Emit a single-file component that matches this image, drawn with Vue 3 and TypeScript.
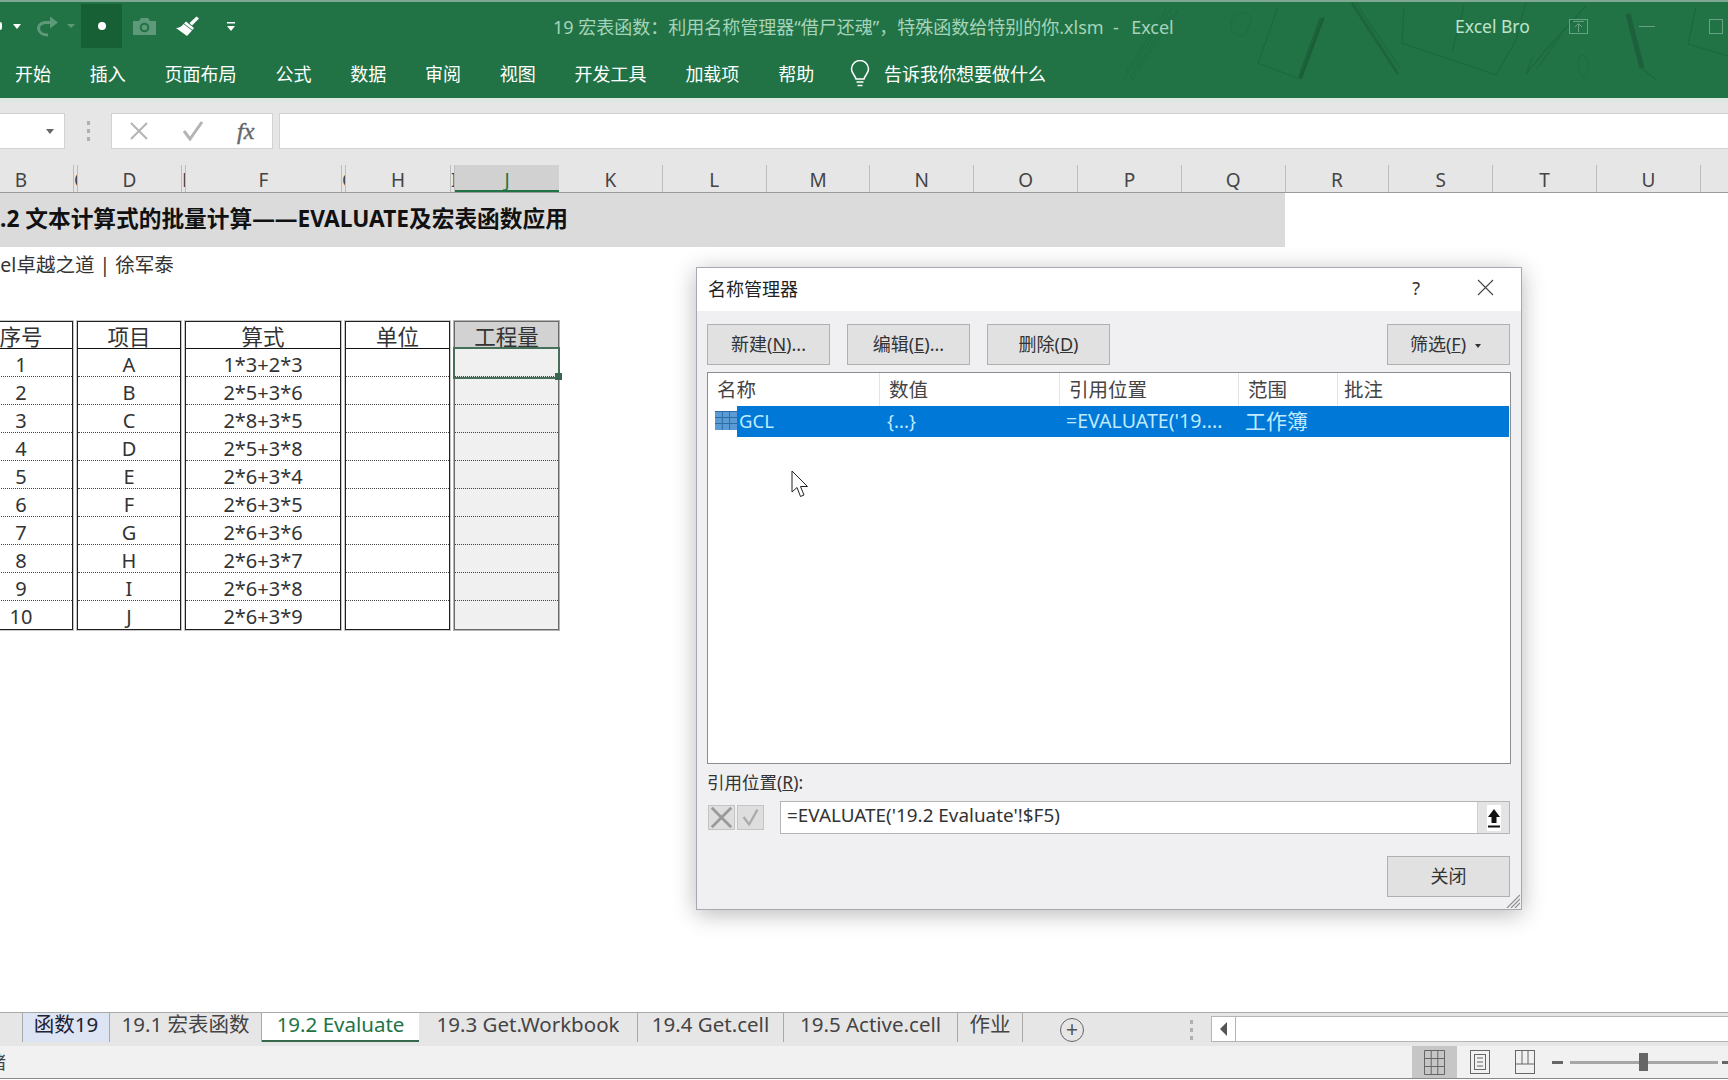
<script setup lang="ts">
interface Row { no: string; item: string; formula: string }
const rows: Row[] = [
  { no: '1', item: 'A', formula: '1*3+2*3' },
  { no: '2', item: 'B', formula: '2*5+3*6' },
  { no: '3', item: 'C', formula: '2*8+3*5' },
  { no: '4', item: 'D', formula: '2*5+3*8' },
  { no: '5', item: 'E', formula: '2*6+3*4' },
  { no: '6', item: 'F', formula: '2*6+3*5' },
  { no: '7', item: 'G', formula: '2*6+3*6' },
  { no: '8', item: 'H', formula: '2*6+3*7' },
  { no: '9', item: 'I', formula: '2*6+3*8' },
  { no: '10', item: 'J', formula: '2*6+3*9' },
]
const menu = ['开始', '插入', '页面布局', '公式', '数据', '审阅', '视图', '开发工具', '加载项', '帮助']
const cols = ['B', 'C', 'D', 'E', 'F', 'G', 'H', 'I', 'J', 'K', 'L', 'M', 'N', 'O', 'P', 'Q', 'R', 'S', 'T', 'U', 'V']
const sheets = ['函数19', '19.1 宏表函数', '19.2 Evaluate', '19.3 Get.Workbook', '19.4 Get.cell', '19.5 Active.cell', '作业']
const listHead = ['名称', '数值', '引用位置', '范围', '批注']
</script>

<template>
  <div class="app">
    <header class="ribbon">
      <svg class="sketch" width="728" height="96" viewBox="0 0 728 96" fill="none">
        <g stroke="#000" stroke-opacity=".1" stroke-width="1.2">
          <path d="M172 5 L124 78 M178 8 L132 78 M166 8 L126 70 M172 12 L130 76" stroke-opacity=".06" />
          <path d="M232 18 C228 30 238 38 246 32 L252 16 C246 8 236 10 232 18 Z" stroke-opacity=".05" />
          <path d="M278 5 L258 61 L300 77 L324 15" />
          <path d="M322 16 L300 76" stroke-width="5" stroke-opacity=".13" />
          <path d="M352 1 L398 72" stroke-width="3" stroke-opacity=".12" />
          <path d="M356 1 L400 66" />
          <path d="M404 5 L402 41 L496 73 L516 38 L526 0" />
          <path d="M452 50 L464 4" />
          <path d="M526 72 L544 50 L586 4 M536 68 L562 32 M526 72 L532 56" />
          <path d="M578 58 C580 50 590 52 588 66 C586 78 578 78 578 58 Z" stroke-opacity=".06" />
          <path d="M628 12 L642 66" stroke-width="5" stroke-opacity=".15" />
          <path d="M642 66 L656 78" />
          <path d="M696 5 L688 42 L728 54" />
        </g>
      </svg>
      <div class="qat">
        <span class="undo-edge"></span>
        <span class="caret qat-caret-a"></span>
        <svg class="i-redo" width="22" height="21" viewBox="0 0 22 21" fill="none">
          <path d="M12 19 C1 19 -1 8 9 6.500 H15" stroke="#5e9a79" stroke-width="3" />
          <path d="M14 0.500 L22 6.500 L14 12.500 Z" fill="#5e9a79" />
        </svg>
        <span class="caret qat-caret-b"></span>
        <div class="rec"><span class="rec-dot"></span></div>
        <svg class="i-cam" width="23" height="17" viewBox="0 0 23 17">
          <path d="M0 3 H6 L8 0 H15 L17 3 H23 V17 H0 Z" fill="#5e9a79" />
          <circle cx="11.500" cy="9.500" r="4.800" fill="#217346" />
          <circle cx="11.500" cy="9.500" r="2.800" fill="#5e9a79" />
        </svg>
        <svg class="i-brush" width="23" height="20" viewBox="0 0 23 20">
          <path d="M23 2.500 L20.500 0.500 L13.500 7 L16 9.500 Z" fill="#fff" />
          <path d="M10 5.500 L18 12 L16.500 14 L8 7.500 Z" fill="#fff" />
          <path d="M7.500 8 L16 14.500 L11 20 L0 12 Q4.500 12 7.500 8 Z" fill="#fff" />
        </svg>
        <svg class="i-custom" width="8" height="9" viewBox="0 0 8 9">
          <path d="M0 0 H8 V1.500 H0 Z M0 4 H8 L4 9 Z" fill="#fff" />
        </svg>
        <div class="doc-title">19 宏表函数：利用名称管理器“借尸还魂”，特殊函数给特别的你.xlsm&nbsp; - &nbsp;&thinsp;Excel</div>
        <div class="user">Excel Bro</div>
        <svg class="i-win i-ribbon" width="19" height="15" viewBox="0 0 19 15" fill="none" stroke="#68a183">
          <rect x=".5" y=".5" width="18" height="14" />
          <path d="M9.500 13 V5 M6 8 L9.500 4.500 L13 8 M4 2.500 H15" />
        </svg>
        <span class="i-min"></span>
        <span class="i-max"></span>
      </div>
      <nav class="menu">
        <span v-for="m in menu" :key="m">{{ m }}</span>
        <div class="tell">
          <svg width="20" height="27" viewBox="0 0 20 27" fill="none" stroke="#fff" stroke-width="1.5">
            <path d="M6 19 C5 15 1.500 13.500 1.500 9 A8.500 8.500 0 0 1 18.500 9 C18.500 13.500 15 15 14 19 Z" />
            <path d="M6.500 22 H13.500 M7.500 25.500 H12.500" />
          </svg>
          <span>告诉我你想要做什么</span>
        </div>
      </nav>
    </header>
    <div class="ribbon-edge"></div>

    <section class="formula">
      <div class="namebox"><span class="caret-dark"></span></div>
      <div class="grip"><i></i><i></i><i></i></div>
      <div class="fx-btns">
        <svg width="20" height="20" viewBox="0 0 20 20" fill="none" stroke="#b4b4b4" stroke-width="2"><path d="M2 2 L18 18 M18 2 L2 18" /></svg>
        <svg width="22" height="20" viewBox="0 0 22 20" fill="none" stroke="#b4b4b4" stroke-width="3"><path d="M2 10 L8 18 L20 1" /></svg>
        <span class="fx">fx</span>
      </div>
      <div class="fx-input"></div>
    </section>

    <div class="col-heads">
      <div v-for="c in cols" :key="c" class="col-head" :class="{ on: c === 'J' }">{{ c }}</div>
    </div>

    <main class="sheet">
      <h1 class="band">.2 文本计算式的批量计算——EVALUATE及宏表函数应用</h1>
      <p class="author">cel卓越之道 | 徐军泰</p>
      <div class="table">
        <div class="col">
          <div class="th">序号</div>
          <div v-for="r in rows" :key="r.no" class="td">{{ r.no }}</div>
        </div>
        <div class="col">
          <div class="th">项目</div>
          <div v-for="r in rows" :key="r.no" class="td">{{ r.item }}</div>
        </div>
        <div class="col">
          <div class="th">算式</div>
          <div v-for="r in rows" :key="r.no" class="td">{{ r.formula }}</div>
        </div>
        <div class="col">
          <div class="th">单位</div>
          <div v-for="r in rows" :key="r.no" class="td"></div>
        </div>
        <div class="col qty">
          <div class="th">工程量</div>
          <div v-for="(r, i) in rows" :key="r.no" class="td" :class="{ sel: i === 0 }"></div>
        </div>
      </div>
    </main>

    <div class="tabbar">
      <div class="tabs">
        <div v-for="(s, i) in sheets" :key="s" class="tab" :class="{ first: i === 0, active: i === 2 }">{{ s }}</div>
      </div>
      <div class="add">+</div>
      <div class="grip tab-grip"><i></i><i></i><i></i></div>
      <div class="hscroll">
        <div class="hscroll-btn"><span></span></div>
      </div>
    </div>

    <footer class="status">
      <span class="ready">绪</span>
      <div class="views">
        <div class="view on">
          <svg width="21" height="25" viewBox="0 0 21 25" fill="none" stroke="#666"><path d="M.5 .5 H20.500 V24.500 H.5 Z M7.200 .5 V24.500 M13.800 .5 V24.500 M.5 8.500 H20.500 M.5 16.500 H20.500" /></svg>
        </div>
        <div class="view">
          <svg width="20" height="24" viewBox="0 0 20 24" fill="none" stroke="#666"><rect x=".5" y=".5" width="19" height="23" /><rect x="4.500" y="4.500" width="11" height="15" /><path d="M7 8 H13 M7 12 H13 M7 16 H13" /></svg>
        </div>
        <div class="view">
          <svg width="20" height="24" viewBox="0 0 20 24" fill="none" stroke="#666"><rect x=".5" y=".5" width="19" height="23" /><path d="M.5 14 H19.500 M7 .5 V14 M13 .5 V14" /></svg>
        </div>
      </div>
      <div class="zoom">
        <span class="z-minus"></span>
        <div class="z-track"><span class="z-thumb"></span></div>
        <span class="z-plus"></span>
      </div>
    </footer>

    <section class="dialog">
      <div class="dlg-title">
        <span>名称管理器</span>
        <span class="help">?</span>
        <svg class="close-x" width="17" height="17" viewBox="0 0 17 17" fill="none" stroke="#444" stroke-width="1.1"><path d="M1 1 L16 16 M16 1 L1 16" /></svg>
      </div>
      <div class="dlg-body">
        <div class="toolbar">
          <button class="btn">新建(<u>N</u>)...</button>
          <button class="btn">编辑(<u>E</u>)...</button>
          <button class="btn">删除(<u>D</u>)</button>
          <button class="btn filter">筛选(<u>F</u>)<span class="caret-dark small"></span></button>
        </div>
        <div class="list">
          <div class="list-head">
            <span v-for="h in listHead" :key="h">{{ h }}</span>
          </div>
          <div class="list-row">
            <svg class="name-ico" width="22" height="19" viewBox="0 0 22 19">
              <rect width="22" height="19" fill="#5b9bd5" />
              <path d="M0 6.500 H22 M0 12.500 H22 M7.300 0 V19 M14.600 0 V19" stroke="#2e6da4" />
              <path d="M0 .5 H22" stroke="#2e6da4" />
            </svg>
            <div class="row-sel">
              <span>GCL</span>
              <span>{...}</span>
              <span class="ref-cell">=EVALUATE('19....</span>
              <span class="cjk-cell">工作簿</span>
              <span></span>
            </div>
          </div>
        </div>
        <div class="ref-label">引用位置(<u>R</u>):</div>
        <div class="ref-row">
          <div class="ref-tool">
            <svg width="27" height="25" viewBox="0 0 27 25" fill="none" stroke="#9a9a9a" stroke-width="3"><path d="M3 2 L24 23 M24 2 L3 23" /></svg>
          </div>
          <div class="ref-tool">
            <svg width="27" height="25" viewBox="0 0 27 25" fill="none" stroke="#ababab" stroke-width="2.500"><path d="M6 12 L12 20 L21 4" /></svg>
          </div>
          <div class="ref-input">
            <span class="ref-text">=EVALUATE('19.2 Evaluate'!$F5)</span>
            <div class="ref-up">
              <svg width="14" height="26" viewBox="0 0 14 26"><rect width="14" height="26" fill="#fff" /><path d="M7 4 L13 12 H9.500 V18 H4.500 V12 H1 Z M1 20.500 H13 V22.500 H1 Z" fill="#111" /></svg>
            </div>
          </div>
        </div>
        <div class="dlg-foot"><button class="btn close">关闭</button></div>
      </div>
      <svg class="grip-corner" width="14" height="14" viewBox="0 0 14 14" stroke="#8d8d8d" stroke-width="1.200"><path d="M14 1 L1 14 M14 5 L5 14 M14 9 L9 14" /></svg>
    </section>

    <svg class="cursor" width="20" height="29" viewBox="0 0 20 29">
      <path d="M1 1 V22 L6 17.500 L9.500 26.500 L13 25 L9.500 16.500 L16.500 16.500 Z" fill="#fff" stroke="#222" stroke-width="1" />
    </svg>
  </div>
</template>

<style scoped>
.app {
  position: relative;
  width: 1728px;
  height: 1080px;
  overflow: hidden;
  background: #fff;
  font-family: "Noto Sans", "Noto Sans CJK SC", sans-serif;
  color: #333;
  display: flex;
  flex-direction: column;
}
.ribbon {
  position: relative;
  height: 98px;
  flex: none;
  box-sizing: border-box;
  border-top: 2px solid #7fa893;
  background: #217346;
  color: #fff;
  overflow: hidden;
}
.sketch { position: absolute; left: 1000px; top: 0; }
.qat { position: relative; height: 48px; display: flex; align-items: center; }
.undo-edge { width: 2px; height: 8px; border-radius: 0 2px 2px 0; background: #fff; }
.caret { width: 0; height: 0; border-left: 4px solid transparent; border-right: 4px solid transparent; }
.qat-caret-a { margin-left: 11px; border-top: 5px solid #fff; }
.i-redo { margin-left: 15px; }
.qat-caret-b { margin-left: 9px; border-top: 4px solid #5e9a79; }
.rec { margin-left: 6px; width: 41px; height: 44px; background: #175f35; display: flex; align-items: center; justify-content: center; }
.rec-dot { width: 8px; height: 8px; border-radius: 50%; background: #fff; }
.i-cam { margin-left: 11px; }
.i-brush { margin-left: 20px; }
.i-custom { margin-left: 28px; }
.doc-title { margin-left: 318px; width: 621px; white-space: nowrap; font-size: 18px; color: #a6d3b9; }
.user { margin-left: 281px; width: 76px; font-size: 17.500px; color: #bfe3cd; white-space: nowrap; }
.i-ribbon { margin-left: 38px; flex: none; }
.i-min { margin-left: 51px; width: 16px; height: 1px; flex: none; background: #68a183; }
.i-max { margin-left: 54px; width: 14px; height: 15px; flex: none; box-sizing: border-box; border: 1px solid #68a183; }
.menu { position: relative; height: 48px; box-sizing: border-box; padding: 0 0 2px 15px; display: flex; align-items: center; gap: 38.800px; font-size: 18px; white-space: nowrap; }
.tell { display: flex; align-items: center; gap: 14px; margin-left: -3px; }
.ribbon-edge { height: 4px; flex: none; background: #dde8e2; }

.formula { height: 63px; flex: none; box-sizing: border-box; background: #e7e6e7; padding: 11px 0 16px; display: flex; }
.namebox { width: 65px; background: #fff; border: 1px solid #d2d2d2; border-left: 0; box-sizing: border-box; display: flex; align-items: center; justify-content: flex-end; padding-right: 10px; }
.caret-dark { width: 0; height: 0; border-left: 4px solid transparent; border-right: 4px solid transparent; border-top: 5px solid #666; }
.caret-dark.small { display: inline-block; margin-left: 9px; vertical-align: 3px; border-left-width: 3.500px; border-right-width: 3.500px; border-top: 4px solid #333; }
.grip { width: 46px; display: flex; flex-direction: column; align-items: center; justify-content: center; gap: 4px; }
.grip i { width: 3px; height: 4px; background: #b0b0b0; }
.fx-btns { width: 162px; background: #fff; border: 1px solid #d2d2d2; box-sizing: border-box; display: flex; align-items: center; padding-left: 17px; }
.fx-btns svg:nth-child(2) { margin-left: 33px; }
.fx { margin-left: 33px; font-family: "Liberation Serif", serif; font-style: italic; font-size: 24px; color: #666; font-weight: 400; line-height: 1; -webkit-text-stroke: .4px #666; }
.fx-input { flex: 1; margin-left: 6px; background: #fff; border: 1px solid #d2d2d2; border-right: 0; }

.col-heads { height: 28px; flex: none; box-sizing: border-box; border-bottom: 1px solid #9a9a9a; background: #e7e6e7; display: grid; grid-template-columns: 74px 4px 104px 4px 156px 4px 105px 4px 104px repeat(12, 103.800px); }
.col-head { box-sizing: border-box; border-right: 1px solid #bdbdbd; text-align: center; overflow: hidden; font-size: 19px; line-height: 31px; color: #444; }
.col-head:first-child { margin-left: -31px; }
.col-head.on { background: #d1d1d1; border-bottom: 2px solid #217346; color: #217346; border-right: 0; }

.sheet { flex: 1; min-height: 0; }
.band { margin: 0; width: 1285px; height: 54px; background: #dbdbdb; font-size: 22.700px; font-weight: 700; line-height: 52px; color: #111; white-space: nowrap; }
.author { margin: 0 0 0 -9px; height: 36px; font-size: 19.500px; line-height: 36px; color: #333; white-space: nowrap; }
.table { margin: 38px 0 0 -31px; display: grid; grid-template-columns: 104px 104px 156px 105px 105px; column-gap: 4px; }
.col { box-sizing: border-box; border: 1px solid #1f1f1f; box-shadow: 0 0 0 1px rgba(70, 70, 70, .3); }
.th { height: 27px; box-sizing: border-box; border-bottom: 1px solid #111; text-align: center; font-size: 21.500px; line-height: 30px; color: #333; white-space: nowrap; }
.td { height: 28px; box-sizing: border-box; border-bottom: 1px dotted #444; text-align: center; font-size: 20px; line-height: 31px; color: #333; }
.td:last-child { border-bottom: 0; }
.qty { background: #f0f0f0; border-color: #6a6a6a; box-shadow: 0 0 0 1px rgba(90, 90, 90, .45); }
.qty .th { background: #d2d2d2; border-bottom-color: #6a6a6a; }
.sel { position: relative; outline: 2px solid #46705a; outline-offset: 0; }
.sel::after { content: ""; position: absolute; right: -4px; bottom: -4px; width: 7px; height: 7px; background: #35684d; }

.tabbar { height: 34px; flex: none; box-sizing: border-box; border-top: 1px solid #a9a9a9; background: #e7e6e7; display: flex; align-items: stretch; }
.tabs { margin-left: 22px; width: 1001px; height: 28px; display: grid; grid-template-columns: 88px 152px 157px 219px 146px 174px 65px; }
.tab { box-sizing: border-box; text-align: center; font-size: 20.500px; line-height: 23px; border-right: 1px solid #a9a9a9; color: #444; white-space: nowrap; }
.tab.first { background: #dde5f4; border-left: 1px solid #a9a9a9; color: #223; }
.tab.active { height: 29px; background: #fff; color: #217346; border-bottom: 2px solid #35684d; border-right: 0; }
.add { margin: 5px 0 0 37px; width: 22px; height: 22px; border: 1px solid #666; border-radius: 50%; text-align: center; font-size: 21px; line-height: 20px; color: #555; }
.tab-grip { width: 3px; margin-left: 106px; }
.hscroll { margin: 3px 0 4px 18px; flex: 1; background: #fff; border: 1px solid #b5b5b5; border-right: 0; }
.hscroll-btn { width: 24px; height: 100%; box-sizing: border-box; border-right: 1px solid #b5b5b5; display: flex; align-items: center; justify-content: center; }
.hscroll-btn span { width: 0; height: 0; border-top: 7px solid transparent; border-bottom: 7px solid transparent; border-right: 7px solid #555; }

.status { height: 33px; flex: none; box-sizing: border-box; margin-bottom: 1px; border-bottom: 1px solid #8a8a8a; background: #f1f1f1; display: flex; align-items: stretch; }
.ready { margin-left: -12px; width: 18px; font-size: 18px; line-height: 32px; color: #444; }
.views { margin-left: 1406px; display: flex; }
.view { width: 45px; display: flex; align-items: center; justify-content: center; }
.view.on { background: #c6c6c6; }
.zoom { margin-left: -1px; flex: 1; display: flex; align-items: center; }
.z-minus { margin-left: 6px; width: 11px; height: 3px; background: #666; }
.z-track { position: relative; margin-left: 7px; width: 148px; height: 3px; background: #a6a6a6; }
.z-thumb { position: absolute; left: 69px; top: -8px; width: 9px; height: 18px; background: #666; }
.z-plus { margin-left: 4px; width: 11px; height: 3px; background: #666; }

.dialog {
  position: absolute;
  left: 696px;
  top: 267px;
  width: 826px;
  height: 643px;
  box-sizing: border-box;
  border: 1px solid #a8a8b4;
  background: #f0eff1;
  box-shadow: 0 4px 22px rgba(0, 0, 0, .28);
  display: flex;
  flex-direction: column;
}
.dlg-title { height: 43px; flex: none; box-sizing: border-box; background: #fff; display: flex; align-items: center; padding: 0 0 4px 11px; font-size: 18px; color: #222; }
.help { margin-left: auto; font-size: 18px; color: #333; }
.close-x { margin-left: 57px; margin-right: 27px; }
.dlg-body { flex: 1; padding: 13px 10px 0; display: flex; flex-direction: column; }
.toolbar { display: flex; gap: 17px; height: 41px; flex: none; }
.btn { width: 123px; height: 41px; box-sizing: border-box; padding: 0 0 4px; border: 1px solid #b0b0b0; background: #e1e1e1; color: #333; font-family: "Noto Sans", "Noto Sans CJK SC", sans-serif; font-size: 18px; }
.btn.filter { margin-left: auto; margin-right: 1px; padding-right: 6px; }
.list { margin-top: 7px; height: 392px; flex: none; box-sizing: border-box; border: 1px solid #8d8d8d; background: #fff; }
.list-head { height: 33px; display: grid; grid-template-columns: 172px 180px 179px 99px 1fr; font-size: 19.500px; line-height: 33px; color: #444; }
.list-head span { padding-left: 9px; border-right: 1px solid #e4e4e4; }
.list-head span:last-child { border-right: 0; padding-left: 6px; }
.list-row { display: flex; align-items: flex-start; }
.name-ico { margin: 5px 0 0 7px; flex: none; }
.row-sel { flex: 1; margin-right: 1px; height: 31px; background: #0078d7; color: #bfeaff; display: grid; grid-template-columns: 150px 179px 179px 1fr 1fr; font-size: 18.500px; line-height: 30px; white-space: nowrap; }
.row-sel span { padding-left: 2px; }
.row-sel span:nth-child(2) { padding-left: 0; }
.row-sel .ref-cell { padding-left: 0; font-size: 19.600px; }
.row-sel .cjk-cell { font-size: 21px; padding-left: 0; }
.ref-label { height: 37px; flex: none; line-height: 36px; font-size: 17.500px; color: #333; }
.ref-row { display: flex; align-items: center; height: 33px; flex: none; padding-left: 1px; }
.ref-tool { width: 27px; height: 25px; margin-right: 2px; background: #dedede; border: 1px solid #c4c4c4; box-sizing: border-box; display: flex; align-items: center; justify-content: center; overflow: hidden; }
.ref-input { margin-left: 14px; width: 730px; height: 33px; box-sizing: border-box; background: #fff; border: 1px solid #b5b5b5; display: flex; align-items: center; padding-left: 6px; font-size: 18.900px; color: #333; }
.ref-text { flex: 1; padding-bottom: 6px; }
.ref-up { width: 31px; height: 31px; background: #e4e4e4; display: flex; align-items: center; justify-content: center; border-left: 1px solid #cfcfcf; }
.dlg-foot { margin-top: 22px; display: flex; justify-content: flex-end; padding-right: 1px; }
.grip-corner { position: absolute; right: 1px; bottom: 1px; }

.cursor { position: absolute; left: 791px; top: 470px; }
</style>
